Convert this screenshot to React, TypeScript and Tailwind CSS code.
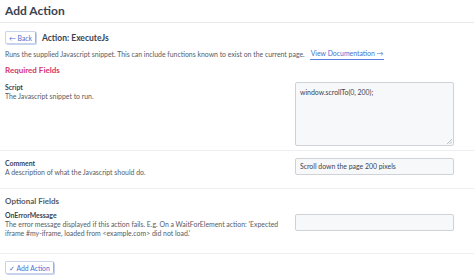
import React from "react";

export default function App() {
  return (
    <div className="w-[474px] h-[276px] bg-white overflow-hidden text-[#3d4451]" style={{ fontFamily: "Lato, 'Noto Sans', sans-serif" }}>
      <div className="h-[23px] border-b border-[#e8e9ec] px-[5px] flex items-center">
        <span className="text-[12px] leading-[14px] font-bold text-[#3b4350]">Add Action</span>
      </div>
      <div className="px-[5px]">
        <div className="flex items-center gap-[6px] mt-[8px]">
          <button className="h-[13px] px-[3px] border border-[#c9d3ea] border-r-[#9fb0dd] rounded-[2px] text-[6.8px] leading-[8px] text-[#4a6fd0] flex items-center shadow-[1px_1px_0_#c7d2ee]">← Back</button>
          <span className="text-[8.5px] leading-[10px] font-bold text-[#3b4350]">Action: ExecuteJs</span>
        </div>
        <div className="flex items-center mt-[5px] text-[6.9px] leading-[9px] text-[#555c66]">
          <span>Runs the supplied Javascript snippet. This can include functions known to exist on the current page.</span>
          <span className="ml-[5px] text-[#4a6fd0] border-b border-[#5b7fdc] pb-[1px] px-[1px]">View Documentation →</span>
        </div>
        <div className="mt-[5px] text-[8px] leading-[10px] font-bold text-[#d6336c]">Required Fields</div>
      </div>
      <div className="flex px-[5px] pt-[7px] pb-[4px] border-b border-[#eeeff1]">
        <div className="flex-1 text-[6.9px] leading-[9px] pt-[1px]">
          <div className="font-bold text-[#3b4350]">Script</div>
          <div className="text-[#555c66]">The Javascript snippet to run.</div>
        </div>
        <div className="w-[159px] h-[64px] mr-[15px] border border-[#cfd2d6] rounded-[2px] bg-[#f7f8fa] relative px-[4px] pt-[5px] text-[6.9px] leading-[9px] text-[#3b4350]">
          window.scrollTo(0, 200);
          <svg className="absolute right-[1px] bottom-[1px]" width="5" height="5" viewBox="0 0 5 5"><path d="M5 0 L0 5 M5 2.5 L2.5 5" stroke="#999" strokeWidth="0.6" /></svg>
        </div>
      </div>
      <div className="flex px-[5px] pt-[7px] pb-[11px] border-b border-[#eeeff1]">
        <div className="flex-1 text-[6.9px] leading-[9px] pt-[1px]">
          <div className="font-bold text-[#3b4350]">Comment</div>
          <div className="text-[#555c66]">A description of what the Javascript should do.</div>
        </div>
        <div className="w-[159px] h-[17px] mr-[15px] border border-[#cfd2d6] rounded-[2px] bg-[#f7f8fa] px-[4px] flex items-center text-[6.9px] text-[#3b4350]">
          Scroll down the page 200 pixels
        </div>
      </div>
      <div className="px-[5px] pt-[7px] text-[8px] leading-[10px] font-bold text-[#555c66]">Optional Fields</div>
      <div className="flex px-[5px] pt-[5px] pb-[15px] border-b border-[#eeeff1]">
        <div className="flex-1 text-[6.9px] leading-[9px]">
          <div className="font-bold text-[#3b4350]">OnErrorMessage</div>
          <div className="text-[#555c66]">The error message displayed if this action fails. E.g. On a WaitForElement action: 'Expected<br />iframe #my-iframe, loaded from &lt;example.com&gt; did not load.'</div>
        </div>
        <div className="w-[159px] h-[17px] mr-[15px] mt-[3px] border border-[#cfd2d6] rounded-[2px] bg-[#f7f8fa]"></div>
      </div>
      <div className="px-[5px] pt-[7px]">
        <button className="h-[13px] px-[3px] border border-[#c9d3ea] border-r-[#9fb0dd] rounded-[2px] text-[6.8px] leading-[8px] text-[#4a6fd0] flex items-center shadow-[1px_1px_0_#c7d2ee]">✓ Add Action</button>
      </div>
    </div>
  );
}
